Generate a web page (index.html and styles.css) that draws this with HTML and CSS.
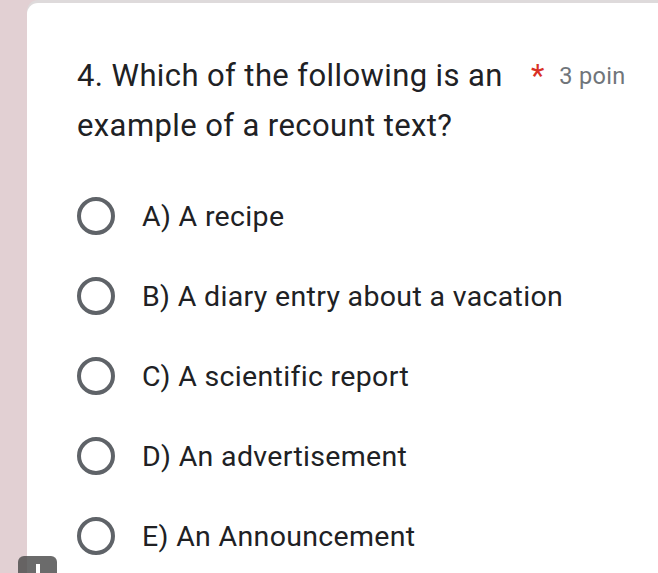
FILE: index.html
```html
<!DOCTYPE html>
<html>
<head>
<meta charset="utf-8">
<link rel="stylesheet" href="styles.css">
</head>
<body>
<div class="page">
  <div class="card">
    <div class="header">
      <div class="title">4. Which of the following is an example of a recount text?</div>
      <span class="req">*</span>
      <span class="points">3 poin</span>
    </div>
    <div class="options">
      <div class="option"><span class="radio"></span><span class="label">A) A recipe</span></div>
      <div class="option"><span class="radio"></span><span class="label">B) A diary entry about a vacation</span></div>
      <div class="option"><span class="radio"></span><span class="label">C) A scientific report</span></div>
      <div class="option"><span class="radio"></span><span class="label">D) An advertisement</span></div>
      <div class="option"><span class="radio"></span><span class="label">E) An Announcement</span></div>
    </div>
  </div>
  <div class="tab"><span class="tab-bar"></span></div>
</div>
</body>
</html>
```

FILE: styles.css
```css
html, body {
  margin: 0;
  padding: 0;
  width: 658px;
  height: 573px;
  overflow: hidden;
  background: #e2d0d3;
  font-family: Roboto, "Noto Sans", sans-serif;
}
.page {
  position: relative;
  height: 573px;
  overflow: hidden;
  padding-top: 3px;
  box-sizing: border-box;
}
.card {
  margin-left: 27px;
  width: 631px;
  height: 570px;
  background: #ffffff;
  border-radius: 11px 0 0 0;
  box-shadow: 0 -3px 0 #dedadb;
  padding: 48px 0 0 50px;
  box-sizing: border-box;
}
.header {
  display: flex;
  align-items: flex-start;
}
.title {
  width: 440px;
  font-size: 31px;
  line-height: 50px;
  letter-spacing: 0.4px;
  color: #202124;
}
.req {
  color: #d93025;
  font-size: 31px;
  line-height: 50px;
  margin-left: 14px;
}
.points {
  color: #70757a;
  font-size: 23.5px;
  letter-spacing: 0.3px;
  line-height: 50px;
  margin-left: 15px;
}
.options {
  margin-top: 25px;
  display: flex;
  flex-direction: column;
}
.option {
  height: 80px;
  display: flex;
  align-items: center;
  gap: 27px;
}
.radio {
  width: 38px;
  height: 38px;
  border: 4px solid #5f6368;
  border-radius: 50%;
  box-sizing: border-box;
  flex: none;
}
.label {
  font-size: 28.5px;
  letter-spacing: 0.33px;
  color: #202124;
}
.tab {
  position: absolute;
  left: 18px;
  bottom: 0;
  width: 39px;
  height: 17px;
  background: rgba(75, 75, 75, 0.82);
  border-radius: 6px 6px 0 0;
}
.tab-bar {
  position: absolute;
  left: 18px;
  top: 8px;
  width: 4px;
  height: 9px;
  background: #ffffff;
}
```
